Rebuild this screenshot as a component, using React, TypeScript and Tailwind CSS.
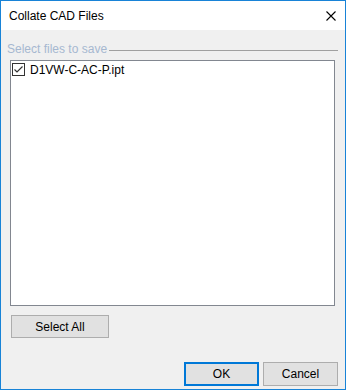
import React, { useState } from 'react';

const CloseIcon = () => (
  <svg width="10" height="10" viewBox="0 0 10 10" className="block">
    <path d="M0.5 0.5 L9.5 9.5 M9.5 0.5 L0.5 9.5" stroke="#000" strokeWidth="1.1" fill="none" />
  </svg>
);

const CheckBox: React.FC<{ checked: boolean; onToggle: () => void }> = ({ checked, onToggle }) => (
  <button
    onClick={onToggle}
    className="w-[13px] h-[13px] border border-[#333] bg-white flex items-center justify-center p-0"
  >
    {checked ? (
      <svg width="11" height="11" viewBox="0 0 11 11">
        <path d="M1.5 5.5 L4 8 L9.5 2.5" stroke="#333" strokeWidth="1.2" fill="none" />
      </svg>
    ) : null}
  </button>
);

export default function App() {
  const [checked, setChecked] = useState(true);

  return (
    <div
      className="w-[346px] h-[390px] border border-[#1883d7] bg-[#f0f0f0] flex flex-col text-[12px] text-black"
      style={{ fontFamily: '"Liberation Sans", Arial, sans-serif' }}
    >
      {/* title bar */}
      <div className="h-[29px] bg-white flex items-center justify-between pl-[8px] pr-[9px] shrink-0">
        <span className="text-[12px] leading-none">Collate CAD Files</span>
        <CloseIcon />
      </div>

      {/* group header */}
      <div className="flex items-center h-[14px] mt-[12px] pl-[6px] pr-[7px]">
        <span className="text-[#a6b8d0] leading-none whitespace-nowrap">Select files to save</span>
        <div className="flex-1 h-px bg-[#a0a0a0] ml-[2px] mt-[2px]" />
      </div>

      {/* file list */}
      <div className="ml-[9px] mt-[4px] w-[325px] h-[246px] bg-white border border-[#828790]">
        <div className="flex items-center gap-[5px] pl-[1px] pt-[1px] h-[16px]">
          <CheckBox checked={checked} onToggle={() => setChecked(!checked)} />
          <span className="leading-none">D1VW-C-AC-P.ipt</span>
        </div>
      </div>

      <div className="ml-[10px] mt-[9px]">
        <button className="w-[98px] h-[23px] bg-[#e1e1e1] border border-[#adadad] leading-none">
          Select All
        </button>
      </div>

      <div className="flex-1" />

      <div className="flex justify-end gap-[4px] pr-[7px] mb-[3px]">
        <button className="w-[75px] h-[24px] bg-[#e1e1e1] border-2 border-[#0078d7] leading-none">OK</button>
        <button className="w-[75px] h-[24px] bg-[#e1e1e1] border border-[#adadad] leading-none">Cancel</button>
      </div>
    </div>
  );
}
